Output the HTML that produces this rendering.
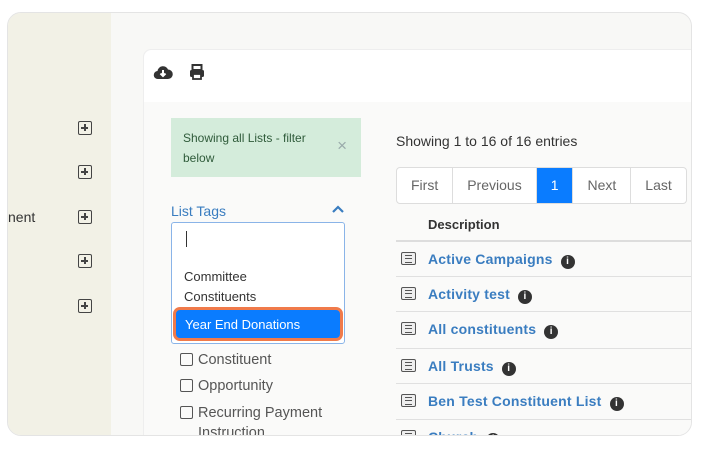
<!DOCTYPE html>
<html><head><meta charset="utf-8"><style>
*{box-sizing:border-box;margin:0;padding:0}
body{width:701px;height:451px;background:#fff;font-family:"Liberation Sans",sans-serif;position:relative;overflow:hidden}
.card{position:absolute;left:7px;top:12px;width:685px;height:424px;border:1px solid #e4e4e4;border-radius:14px;overflow:hidden;background:#f8f8f6}
.side{position:absolute;left:0;top:0;width:103px;height:100%;background:#f2f1e6}
.plus{position:absolute;left:70px;width:14px;height:14px;border:1.5px solid #444;border-radius:2px}
.plus:before{content:"";position:absolute;left:2px;top:5px;width:7px;height:1.5px;background:#444}
.plus:after{content:"";position:absolute;left:5px;top:2px;width:1.5px;height:7px;background:#444}
.panel{position:absolute;left:135px;top:36px;width:600px;height:420px;background:#fafaf9;border-radius:8px;border:1px solid #eee}
.phead{height:52px;background:#fff;border-radius:8px 8px 0 0}
.alert{position:absolute;left:27px;top:68px;width:190px;height:59px;background:#d4ecdb;color:#2f5b3a;font-size:12px;line-height:20px;padding:10px 40px 10px 12px}
.x{position:absolute;right:14px;top:18px;color:#9aa;font-size:17px}
.a{color:#3a7dc0;font-size:14px;position:absolute}
.sel{position:absolute;left:27px;top:172px;width:174px;height:122px;border:1px solid #8ab4e8;border-radius:3px;background:#fff}
.opt{position:absolute;font-size:13px;color:#333}
.hl{position:absolute;left:1px;top:84px;width:170px;height:34px;border:3px solid #f07a4a;border-radius:7px;background:#0a7cff;color:#fff;font-size:13px;padding:7px 9px}
.cb{position:absolute;left:36px;font-size:14.5px;color:#555}
.cb i{display:inline-block;width:13px;height:13px;border:1.2px solid #555;border-radius:2px;vertical-align:-2px;margin-right:5px}
.pag{position:absolute;left:252px;top:117px;height:37px;display:flex;border:1px solid #ddd;border-radius:4px;background:#fff;font-size:14px;color:#666}
.pag div{padding:0 14px;line-height:35px;border-right:1px solid #ddd}
.row{position:absolute;left:252px;width:300px;border-top:1px solid #e0e0e0;height:36px}
.row b{position:absolute;left:32px;top:9px;color:#3a7dc0;font-size:14px;letter-spacing:0.2px}
.li{position:absolute;left:5px;top:10px;width:15px;height:13px;border:1.5px solid #555;border-radius:2px;background:#eee}
.li:before{content:"";position:absolute;left:3px;top:2px;width:7px;height:6px;border-top:1px solid #555;border-bottom:1px solid #555}
.li:after{content:"";position:absolute;left:3px;top:5px;width:7px;height:1px;background:#555}
.info{display:inline-block;width:14px;height:14px;border-radius:50%;background:#333;color:#fff;font-size:10px;text-align:center;line-height:14px;margin-left:8px;vertical-align:0;font-weight:bold}
</style></head><body>
<div class="card">
<div class="side">
<div class="plus" style="top:108px"></div>
<div class="plus" style="top:152px"></div>
<div class="plus" style="top:197px"></div>
<div class="plus" style="top:241px"></div>
<div class="plus" style="top:286px"></div>
<div style="position:absolute;left:0;top:196px;font-size:14px;color:#333">nent</div>
</div>
<div class="panel">
<div class="phead">
<svg style="position:absolute;left:9px;top:15px" width="20" height="16" viewBox="0 0 20 16"><path d="M5 14a4 4 0 0 1-.5-8A5.5 5.5 0 0 1 15 4.5a4.5 4.5 0 0 1 0 9.5z" fill="#333"/><path d="M10 5v6M7.5 8.5 10 11l2.5-2.5" stroke="#fff" stroke-width="2" fill="none"/></svg>
<svg style="position:absolute;left:45px;top:14px" width="16" height="17" viewBox="0 0 16 17"><rect x="3.5" y="1" width="9" height="5" fill="none" stroke="#333" stroke-width="2"/><rect x="1" y="6" width="14" height="7" rx="1.5" fill="#333"/><rect x="4" y="10" width="8" height="5" fill="#fff" stroke="#333" stroke-width="1.8"/></svg>
</div>
<div class="alert">Showing all Lists - filter below<span class="x">×</span></div>
<div class="a" style="left:27px;top:153px">List Tags</div>
<svg style="position:absolute;left:188px;top:155px" width="12" height="8"><path d="M1 7 6 2l5 5" stroke="#3a7dc0" stroke-width="2.2" fill="none"/></svg>
<div class="sel">
<div style="position:absolute;left:14px;top:8px;width:1px;height:16px;background:#333"></div>
<div class="opt" style="left:12px;top:46px">Committee</div>
<div class="opt" style="left:12px;top:66px">Constituents</div>
<div class="hl">Year End Donations</div>
</div>
<div class="cb" style="top:302px"><i></i>Constituent</div>
<div class="cb" style="top:328px"><i></i>Opportunity</div>
<div class="cb" style="top:355px"><i></i>Recurring Payment</div>
<div class="cb" style="top:375px;padding-left:18px">Instruction</div>
<div style="position:absolute;left:252px;top:83px;font-size:14px;color:#333">Showing 1 to 16 of 16 entries</div>
<div class="pag"><div>First</div><div>Previous</div><div style="background:#0a7cff;color:#fff;padding:0 14px">1</div><div>Next</div><div style="border:none">Last</div></div>
<div style="position:absolute;left:284px;top:167px;font-size:13px;font-weight:bold;color:#333">Description</div>
<div class="row" style="top:190px;border-top:2px solid #ddd"><span class="li"></span><b>Active Campaigns<span class="info">i</span></b></div>
<div class="row" style="top:226px"><span class="li"></span><b>Activity test<span class="info">i</span></b></div>
<div class="row" style="top:261px"><span class="li"></span><b>All constituents<span class="info">i</span></b></div>
<div class="row" style="top:298px"><span class="li"></span><b>All Trusts<span class="info">i</span></b></div>
<div class="row" style="top:333px"><span class="li"></span><b>Ben Test Constituent List<span class="info">i</span></b></div>
<div class="row" style="top:369px"><span class="li"></span><b>Church<span class="info">i</span></b></div>
</div>
</div>
</body></html>
